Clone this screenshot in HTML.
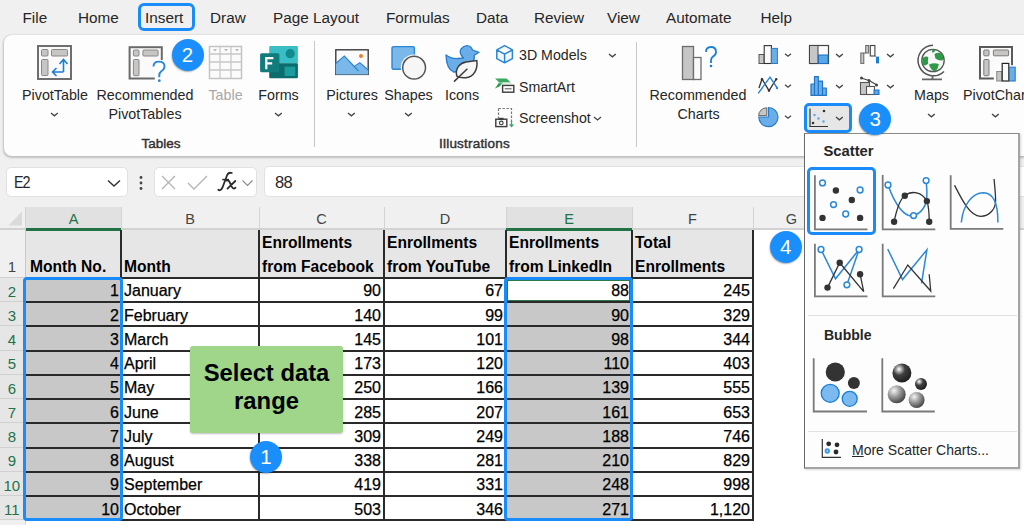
<!DOCTYPE html>
<html><head><meta charset="utf-8"><style>
html,body{margin:0;padding:0;width:1024px;height:525px;overflow:hidden;background:#f0f0f0}
body{position:relative;font-family:"Liberation Sans",sans-serif}
.t{position:absolute;white-space:nowrap;line-height:1;font-family:"Liberation Sans",sans-serif}
.c{-webkit-text-stroke:0.25px currentColor}
.r{position:absolute}
</style></head><body>
<div class="r" style="left:0;top:0;width:1024px;height:525px;background:#f0f0f0"></div>
<div class="t" style="left:22.5px;top:10.0px;font-size:15.3px;font-weight:400;color:#262626;">File</div>
<div class="t" style="left:78.0px;top:10.0px;font-size:15.3px;font-weight:400;color:#262626;">Home</div>
<div class="t" style="left:145.0px;top:10.0px;font-size:15.3px;font-weight:400;color:#262626;">Insert</div>
<div class="t" style="left:210.0px;top:10.0px;font-size:15.3px;font-weight:400;color:#262626;">Draw</div>
<div class="t" style="left:273.0px;top:10.0px;font-size:15.3px;font-weight:400;color:#262626;">Page Layout</div>
<div class="t" style="left:386.0px;top:10.0px;font-size:15.3px;font-weight:400;color:#262626;">Formulas</div>
<div class="t" style="left:476.0px;top:10.0px;font-size:15.3px;font-weight:400;color:#262626;">Data</div>
<div class="t" style="left:534.0px;top:10.0px;font-size:15.3px;font-weight:400;color:#262626;">Review</div>
<div class="t" style="left:607.0px;top:10.0px;font-size:15.3px;font-weight:400;color:#262626;">View</div>
<div class="t" style="left:666.0px;top:10.0px;font-size:15.3px;font-weight:400;color:#262626;">Automate</div>
<div class="t" style="left:760.5px;top:10.0px;font-size:15.3px;font-weight:400;color:#262626;">Help</div>
<div class="r" style="left:138px;top:3px;width:57px;height:28px;border:3px solid #1a8cfa;border-radius:6px;box-sizing:border-box"></div>
<div class="r" style="left:4px;top:35px;width:1040px;height:121px;background:#fdfdfd;border-radius:8px;box-shadow:0 1px 2px 0.5px rgba(0,0,0,0.2)"></div>
<div class="r" style="left:314px;top:41px;width:1px;height:106px;background:#c8c8c8"></div>
<div class="r" style="left:636px;top:42px;width:1px;height:105px;background:#c8c8c8"></div>
<div class="t" style="left:11.0px;width:300px;top:137.0px;font-size:13.5px;font-weight:400;color:#333;text-align:center;-webkit-text-stroke:0.45px #333;">Tables</div>
<div class="t" style="left:324.5px;width:300px;top:137.0px;font-size:13.5px;font-weight:400;color:#333;text-align:center;-webkit-text-stroke:0.45px #333;letter-spacing:0.2px;">Illustrations</div>
<svg class="r" style="left:37px;top:45px" width="35" height="36" viewBox="0 0 35 36">
<rect x="1" y="1" width="33" height="33" fill="#fafafa" stroke="#6e6e6e" stroke-width="2"/>
<rect x="4.5" y="4.5" width="6.5" height="6.5" rx="1" fill="#c8c6c4" stroke="#8a8886" stroke-width="1"/>
<rect x="14.5" y="4.5" width="16" height="6.5" rx="1" fill="#c8c6c4" stroke="#8a8886" stroke-width="1"/>
<rect x="4.5" y="14.5" width="6.5" height="16" rx="1" fill="#c8c6c4" stroke="#8a8886" stroke-width="1"/>
<path d="M26.5 27 V15 M22.5 19 L26.5 14.5 L30.5 19 M16 27 H26.5 M19.5 23 L15.5 27 L19.5 31" fill="none" stroke="#1a7fd4" stroke-width="1.6"/>
</svg>
<div class="t" style="left:-95.0px;width:300px;top:88.4px;font-size:14.3px;font-weight:400;color:#262626;text-align:center;">PivotTable</div>
<svg class="r" style="left:50.1px;top:110.6px" width="8.8" height="6.8" viewBox="0 0 8.8 6.8"><path d="M1 2.0 L4.4 4.8 L7.8 2.0" fill="none" stroke="#444" stroke-width="1.3"/></svg>
<svg class="r" style="left:128px;top:45px" width="40" height="40" viewBox="0 0 40 40">
<rect x="1.6" y="2.2" width="32.2" height="31.3" fill="#fafafa" stroke="#6a6a6a" stroke-width="2"/>
<rect x="5.4" y="5" width="5.6" height="6" rx="1" fill="#c8c6c4" stroke="#8a8886" stroke-width="1"/>
<rect x="14.9" y="5" width="15.2" height="6" rx="1" fill="#c8c6c4" stroke="#8a8886" stroke-width="1"/>
<rect x="5.4" y="14.5" width="5.6" height="16.2" rx="1" fill="#c8c6c4" stroke="#8a8886" stroke-width="1"/>
<rect x="26.8" y="15" width="14" height="25" fill="#fdfdfd"/>
<path d="M25.5 21.5 Q25.5 16.6 31 16.6 Q36.5 16.6 36.5 21.3 Q36.5 24.3 33.3 26.2 Q31.3 27.6 31.3 30.3 V32.3" fill="none" stroke="#2a86d6" stroke-width="1.9"/>
<circle cx="31.3" cy="35.7" r="1.4" fill="#2a86d6"/>
</svg>
<div class="t" style="left:-5.0px;width:300px;top:88.4px;font-size:14.3px;font-weight:400;color:#262626;text-align:center;">Recommended</div>
<div class="t" style="left:-5.0px;width:300px;top:107.4px;font-size:14.3px;font-weight:400;color:#262626;text-align:center;">PivotTables</div>
<svg class="r" style="left:208px;top:45px" width="36" height="36" viewBox="0 0 36 36">
<rect x="1.5" y="1.5" width="32" height="32" fill="#fbfbfb" stroke="#c4c4c4" stroke-width="1.5"/>
<path d="M1.5 9 H33.5 M1.5 17 H33.5 M1.5 25 H33.5 M12 1.5 V33.5 M23 1.5 V33.5" stroke="#c8c8c8" stroke-width="1.3"/>
<path d="M5 4 L7 6.5 L9 4 Z M16 4 L18 6.5 L20 4 Z M27 4 L29 6.5 L31 4 Z" fill="#b8b8b8"/>
</svg>
<div class="t" style="left:75.5px;width:300px;top:88.4px;font-size:14.3px;font-weight:400;color:#a8a8a8;text-align:center;">Table</div>
<svg class="r" style="left:259px;top:44px" width="40" height="36" viewBox="0 0 40 36">
<rect x="10.2" y="2" width="28.7" height="17.5" rx="1" fill="#38bec4"/>
<circle cx="31.2" cy="9.7" r="4.6" fill="#12898b"/>
<rect x="10.2" y="19.2" width="28.7" height="15" rx="1" fill="#0c6b6b"/>
<rect x="25.6" y="22.6" width="10.7" height="9.4" fill="#1c9c9c"/>
<rect x="1.1" y="9.3" width="19.3" height="19" rx="1.5" fill="#107c7c"/>
<path d="M7.3 25.2 V14.2 H14.4 M7.3 19.4 H13.2" fill="none" stroke="#fff" stroke-width="2.2"/>
</svg>
<div class="t" style="left:128.5px;width:300px;top:88.4px;font-size:14.3px;font-weight:400;color:#262626;text-align:center;">Forms</div>
<svg class="r" style="left:273.6px;top:110.6px" width="8.8" height="6.8" viewBox="0 0 8.8 6.8"><path d="M1 2.0 L4.4 4.8 L7.8 2.0" fill="none" stroke="#444" stroke-width="1.3"/></svg>
<svg class="r" style="left:334px;top:48px" width="36" height="28" viewBox="0 0 36 28">
<rect x="1.8" y="1.8" width="32.4" height="24.6" fill="#fafafa" stroke="#3c3c3c" stroke-width="1.4"/>
<path d="M1.8 15.5 L10.3 8 L21 18.5 L25.8 14.6 L34.2 22 V26.4 H1.8 Z" fill="#7ab8ea"/>
<path d="M1.8 15.5 L10.3 8 L24.5 23 M19.5 19 L25.8 14.6 L34.2 22" fill="none" stroke="#2a86d6" stroke-width="1.1"/>
<circle cx="27" cy="8" r="2" fill="#e8821e"/>
</svg>
<div class="t" style="left:202.0px;width:300px;top:88.4px;font-size:14.3px;font-weight:400;color:#262626;text-align:center;">Pictures</div>
<svg class="r" style="left:347.1px;top:110.6px" width="8.8" height="6.8" viewBox="0 0 8.8 6.8"><path d="M1 2.0 L4.4 4.8 L7.8 2.0" fill="none" stroke="#444" stroke-width="1.3"/></svg>
<svg class="r" style="left:390px;top:45px" width="38" height="37" viewBox="0 0 38 37">
<rect x="2" y="1.6" width="22.4" height="22.6" rx="1.5" fill="#7ab8ea" stroke="#2a86d6" stroke-width="1.4"/>
<circle cx="24.1" cy="22.7" r="13.3" fill="#fdfdfd"/>
<circle cx="24.1" cy="22.7" r="11.4" fill="#f6f6f6" stroke="#555" stroke-width="1.5"/>
</svg>
<div class="t" style="left:258.5px;width:300px;top:88.4px;font-size:14.3px;font-weight:400;color:#262626;text-align:center;">Shapes</div>
<svg class="r" style="left:403.6px;top:110.6px" width="8.8" height="6.8" viewBox="0 0 8.8 6.8"><path d="M1 2.0 L4.4 4.8 L7.8 2.0" fill="none" stroke="#444" stroke-width="1.3"/></svg>
<svg class="r" style="left:444px;top:44px" width="38" height="40" viewBox="0 0 38 40">
<path d="M2 11 Q7 15 14 14.5 L19.5 14 Q14.5 9 17 5 Q20 1.5 23 1.7 Q27 2 28.5 6 L35 8.3 L30 11.5 Q31 14 29 18 L26 27 L9.5 28 Q2.5 25 2 11 Z" fill="#6aaee9" stroke="#2a7cc9" stroke-width="1.3" stroke-linejoin="round"/>
<path d="M12.7 32 C11 24 16 19 22 18 L32.8 16.6 C34 25 30 33 21.7 33.7 C17 34 14 33 12.7 32 Z" fill="#f6f6f6" stroke="#3c3c3c" stroke-width="1.5"/>
<path d="M10 37.6 L23.4 24.7" fill="none" stroke="#3c3c3c" stroke-width="1.5"/>
</svg>
<div class="t" style="left:312.0px;width:300px;top:88.4px;font-size:14.3px;font-weight:400;color:#262626;text-align:center;">Icons</div>
<svg class="r" style="left:494px;top:43px" width="20" height="22" viewBox="0 0 20 22">
<path d="M10.6 2.6 L18.4 6.8 V15.6 L10.6 19.8 L2.8 15.6 V6.8 Z M2.8 6.8 L10.6 11.2 L18.4 6.8 M10.6 11.2 V19.8" fill="#f2f7fc" stroke="#2a86d6" stroke-width="1.5" stroke-linejoin="round"/>
</svg>
<div class="t" style="left:519.0px;top:48.0px;font-size:14.2px;font-weight:400;color:#262626;">3D Models</div>
<svg class="r" style="left:607.6px;top:51.6px" width="8.8" height="6.8" viewBox="0 0 8.8 6.8"><path d="M1 2.0 L4.4 4.8 L7.8 2.0" fill="none" stroke="#444" stroke-width="1.3"/></svg>
<svg class="r" style="left:494px;top:77px" width="22" height="18" viewBox="0 0 22 18">
<path d="M1 1.6 H12.5 L16.5 5.2 H5 Z" fill="#3aa860"/>
<path d="M1 11.5 L5 5.5 H9 L5.5 9.5 Z" fill="#2e9a52"/>
<path d="M4 6 H17" stroke="#9ed3ad" stroke-width="0.8"/>
<rect x="8.6" y="8.4" width="11.2" height="6.8" fill="#fafafa" stroke="#3c3c3c" stroke-width="1.4"/>
<path d="M10.8 11.8 H17.6" stroke="#555" stroke-width="1"/>
</svg>
<div class="t" style="left:519.0px;top:80.0px;font-size:14.2px;font-weight:400;color:#262626;">SmartArt</div>
<svg class="r" style="left:494px;top:107px" width="22" height="21" viewBox="0 0 22 21">
<path d="M4.5 1.5 H17.5 V15" fill="none" stroke="#777" stroke-width="1.2" stroke-dasharray="2.4 1.6"/>
<path d="M4.5 1.5 V11" fill="none" stroke="#777" stroke-width="1.2" stroke-dasharray="2.4 1.6"/>
<rect x="1.8" y="12.2" width="11" height="7.4" fill="#fafafa" stroke="#3c3c3c" stroke-width="1.4"/>
<rect x="4.5" y="10.8" width="5" height="2" fill="#3c3c3c"/>
<circle cx="7.3" cy="15.9" r="1.8" fill="none" stroke="#3c3c3c" stroke-width="1.1"/>
<path d="M17.5 14 V19.5 M15.6 17.4 L17.5 19.6 L19.4 17.4" stroke="#3aa860" stroke-width="1.3" fill="none"/>
</svg>
<div class="t" style="left:519.0px;top:111.0px;font-size:14.2px;font-weight:400;color:#262626;">Screenshot</div>
<svg class="r" style="left:592.5px;top:114.5px" width="9.0" height="7.0" viewBox="0 0 9.0 7.0"><path d="M1 2.1 L4.5 4.9 L8.0 2.1" fill="none" stroke="#444" stroke-width="1.3"/></svg>
<svg class="r" style="left:680px;top:45px" width="40" height="36" viewBox="0 0 40 36">
<rect x="2.5" y="1.5" width="11" height="33" fill="#c8c6c4" stroke="#6e6e6e" stroke-width="1.3"/>
<rect x="13.5" y="12.5" width="7.5" height="22" fill="#fafafa" stroke="#6e6e6e" stroke-width="1.3"/>
<path d="M26 7 Q26 2 31 2 Q36 2 36 7 Q36 10 32.5 12 Q31 13 31 16 V18" fill="none" stroke="#1a7fd4" stroke-width="1.8"/>
<circle cx="31" cy="21" r="1.3" fill="#1a7fd4"/>
</svg>
<div class="t" style="left:548.0px;width:300px;top:88.4px;font-size:14.3px;font-weight:400;color:#262626;text-align:center;">Recommended</div>
<div class="t" style="left:548.5px;width:300px;top:107.4px;font-size:14.3px;font-weight:400;color:#262626;text-align:center;">Charts</div>
<svg class="r" style="left:757px;top:44px" width="22" height="21" viewBox="0 0 22 21">
<rect x="2" y="10.5" width="5.2" height="9" fill="#c8c6c4" stroke="#555" stroke-width="1"/>
<rect x="7.2" y="1.6" width="7.2" height="17.9" fill="#fafafa" stroke="#333" stroke-width="1.1"/>
<rect x="14.4" y="4.4" width="6" height="15.1" fill="#6aaee9" stroke="#2a7cc9" stroke-width="1"/>
</svg>
<svg class="r" style="left:784px;top:52px" width="8" height="6" viewBox="0 0 8 6"><path d="M1 1.8 L4 4.2 L7 1.8" fill="none" stroke="#444" stroke-width="1.3"/></svg>
<svg class="r" style="left:757px;top:76px" width="22" height="19" viewBox="0 0 22 19">
<path d="M2 12 L5 3 L12 14.7 L19.3 3" fill="none" stroke="#333" stroke-width="1.3"/>
<circle cx="5" cy="3.2" r="1.2" fill="#333"/><circle cx="12" cy="14.5" r="1.2" fill="#333"/><circle cx="19.2" cy="3.2" r="1.2" fill="#333"/>
<path d="M1.2 17.4 L13 1.2 L20.2 12" fill="none" stroke="#2a86d6" stroke-width="1.4"/>
<circle cx="20" cy="12" r="1.2" fill="#2a86d6"/>
</svg>
<svg class="r" style="left:784px;top:83px" width="8" height="6" viewBox="0 0 8 6"><path d="M1 1.8 L4 4.2 L7 1.8" fill="none" stroke="#444" stroke-width="1.3"/></svg>
<svg class="r" style="left:757px;top:106px" width="23" height="23" viewBox="0 0 23 23">
<path d="M11.5 11 V1.5 A9.6 9.6 0 1 1 1.8 11 Z" fill="#6aaee9" stroke="#2a7cc9" stroke-width="1.2"/>
<path d="M9.8 9.6 V1.8 A8 8 0 0 0 1.6 9.6 Z" fill="#c8c6c4" stroke="#666" stroke-width="1"/>
</svg>
<svg class="r" style="left:784px;top:114px" width="8" height="6" viewBox="0 0 8 6"><path d="M1 1.8 L4 4.2 L7 1.8" fill="none" stroke="#444" stroke-width="1.3"/></svg>
<svg class="r" style="left:808px;top:44px" width="22" height="21" viewBox="0 0 22 21">
<rect x="1.5" y="1.5" width="19" height="18" fill="#fafafa" stroke="#444" stroke-width="1.2"/>
<rect x="2" y="2" width="8" height="17" fill="#c8c6c4"/>
<path d="M10 1.5 V19.5" stroke="#444" stroke-width="1"/>
<rect x="10.5" y="11" width="9.5" height="8.5" fill="#5aa6e6" stroke="#1a6fc0" stroke-width="1"/>
</svg>
<svg class="r" style="left:834.6px;top:51.6px" width="8.8" height="6.8" viewBox="0 0 8.8 6.8"><path d="M1 2.0 L4.4 4.8 L7.8 2.0" fill="none" stroke="#444" stroke-width="1.3"/></svg>
<svg class="r" style="left:859px;top:44px" width="22" height="21" viewBox="0 0 22 21">
<rect x="1.8" y="9" width="3" height="10.4" fill="#c8c6c4" stroke="#666" stroke-width="1"/>
<path d="M4.8 9 H6.7" stroke="#666" stroke-width="1"/>
<rect x="6.7" y="1.5" width="3" height="7.5" fill="#c8c6c4" stroke="#666" stroke-width="1"/>
<rect x="11.3" y="1.5" width="4.6" height="10.5" fill="#fafafa" stroke="#444" stroke-width="1.1"/>
<path d="M15.9 12 H17" stroke="#666" stroke-width="1"/>
<rect x="17" y="12.6" width="3" height="6.8" fill="#1a7fd4"/>
</svg>
<svg class="r" style="left:885.6px;top:51.6px" width="8.8" height="6.8" viewBox="0 0 8.8 6.8"><path d="M1 2.0 L4.4 4.8 L7.8 2.0" fill="none" stroke="#444" stroke-width="1.3"/></svg>
<svg class="r" style="left:809px;top:75px" width="20" height="21" viewBox="0 0 20 21">
<path d="M2 20.4 V9 H5.5 V20.4 Z M5.5 20.4 V1.6 H9.3 V20.4 Z M9.3 20.4 V6.1 H13.5 V20.4 Z M13.5 20.4 V13 H17.3 V20.4 Z" fill="#6aaee9" stroke="#1f74c8" stroke-width="1.2" stroke-linejoin="round"/>
</svg>
<svg class="r" style="left:834.6px;top:82.6px" width="8.8" height="6.8" viewBox="0 0 8.8 6.8"><path d="M1 2.0 L4.4 4.8 L7.8 2.0" fill="none" stroke="#444" stroke-width="1.3"/></svg>
<svg class="r" style="left:859px;top:75px" width="22" height="21" viewBox="0 0 22 21">
<rect x="1.5" y="7.5" width="9" height="12" fill="#c8c6c4" stroke="#555" stroke-width="1.1"/>
<rect x="7.5" y="11.5" width="8" height="8" fill="#fafafa" stroke="#555" stroke-width="1.1"/>
<rect x="15" y="15" width="5" height="4.5" fill="#5aa6e6" stroke="#1a6fc0" stroke-width="1"/>
<path d="M2 3 L10 5.5 L18 10" fill="none" stroke="#444" stroke-width="1.2"/>
<circle cx="2.5" cy="3" r="1.5" fill="#444"/><circle cx="10" cy="5.5" r="1.5" fill="#444"/><circle cx="17.5" cy="10" r="1.5" fill="#444"/>
</svg>
<svg class="r" style="left:885.6px;top:82.6px" width="8.8" height="6.8" viewBox="0 0 8.8 6.8"><path d="M1 2.0 L4.4 4.8 L7.8 2.0" fill="none" stroke="#444" stroke-width="1.3"/></svg>
<div class="r" style="left:804px;top:103px;width:48px;height:30px;background:#e6e6e6;border:3px solid #1a8cfa;border-radius:5px;box-sizing:border-box"></div>
<svg class="r" style="left:808px;top:107px" width="22" height="22" viewBox="0 0 22 22">
<path d="M2 1.5 V19.5 H20" fill="none" stroke="#333" stroke-width="1.2"/>
<circle cx="5" cy="16" r="1.3" fill="#333"/><circle cx="16" cy="4" r="1.3" fill="#333"/>
<circle cx="6.5" cy="8" r="1.2" fill="#5aa6e6"/><circle cx="10.5" cy="11.5" r="1.2" fill="#5aa6e6"/><circle cx="15.5" cy="14.5" r="1.2" fill="#5aa6e6"/>
</svg>
<svg class="r" style="left:834.6px;top:114.6px" width="8.8" height="6.8" viewBox="0 0 8.8 6.8"><path d="M1 2.0 L4.4 4.8 L7.8 2.0" fill="none" stroke="#444" stroke-width="1.3"/></svg>
<svg class="r" style="left:915px;top:43px" width="34" height="40" viewBox="0 0 34 40">
<circle cx="18" cy="17.5" r="11.2" fill="#f8f8f8" stroke="#555" stroke-width="1.3"/>
<path d="M18 2.2 A15.3 15.3 0 1 0 29 28.5" fill="none" stroke="#555" stroke-width="1.5"/>
<path d="M7.8 15 Q11 12.8 13.3 14 Q12.5 18 13.3 20.5 Q11 23 8 22.5 Q6.3 18 7.8 15 Z" fill="#2e9a48"/>
<path d="M17.3 6.5 Q19.5 5.8 20.3 7.5 Q19.3 9.8 17 9.8 Z" fill="#2e9a48"/>
<path d="M19.5 11 Q23 8.6 26.8 10.6 Q29 14 28 17.3 Q23 17.8 20.3 15.2 Z" fill="#2e9a48"/>
<path d="M14 21.5 Q19 19.4 23.8 21 Q23.3 26.3 19.5 28.6 Q15.6 27 14 21.5 Z" fill="#2e9a48"/>
<path d="M17.5 32.5 V36 M7 36.3 H27" stroke="#666" stroke-width="1.8"/>
</svg>
<div class="t" style="left:781.5px;width:300px;top:88.4px;font-size:14.3px;font-weight:400;color:#262626;text-align:center;">Maps</div>
<svg class="r" style="left:926.6px;top:111.6px" width="8.8" height="6.8" viewBox="0 0 8.8 6.8"><path d="M1 2.0 L4.4 4.8 L7.8 2.0" fill="none" stroke="#444" stroke-width="1.3"/></svg>
<svg class="r" style="left:979px;top:46px" width="40" height="38" viewBox="0 0 40 38">
<rect x="1" y="1" width="32" height="31.5" fill="#fafafa" stroke="#5a5a5a" stroke-width="2"/>
<rect x="4.8" y="4" width="5.2" height="5.8" rx="0.8" fill="#c8c6c4" stroke="#7a7a7a" stroke-width="1"/>
<rect x="14.4" y="4" width="15.2" height="5.8" rx="0.8" fill="#c8c6c4" stroke="#7a7a7a" stroke-width="1"/>
<rect x="4.8" y="13.5" width="5.2" height="16.2" rx="0.8" fill="#c8c6c4" stroke="#7a7a7a" stroke-width="1"/>
<rect x="14.8" y="19.2" width="25" height="19" fill="#fdfdfd"/>
<rect x="17.7" y="25.5" width="5.2" height="9.5" fill="#c8c6c4" stroke="#8a8a8a" stroke-width="1"/>
<rect x="23.2" y="17.4" width="6.6" height="17.6" fill="#fafafa" stroke="#222" stroke-width="1.2"/>
<rect x="30.4" y="21.2" width="5.8" height="13.8" fill="#6aaee9" stroke="#2a7cc9" stroke-width="1.1"/>
</svg>
<div class="t" style="left:963.0px;top:88.4px;font-size:14.3px;font-weight:400;color:#262626;">PivotChart</div>
<svg class="r" style="left:990.6px;top:111.6px" width="8.8" height="6.8" viewBox="0 0 8.8 6.8"><path d="M1 2.0 L4.4 4.8 L7.8 2.0" fill="none" stroke="#444" stroke-width="1.3"/></svg>
<div class="r" style="left:6px;top:167px;width:122px;height:30px;background:#fff;border:1px solid #e1e1e1;border-radius:5px;box-sizing:border-box"></div>
<div class="t" style="left:14.0px;top:174.8px;font-size:16px;font-weight:400;color:#262626;letter-spacing:-1.2px;transform:scaleX(0.9);transform-origin:left;">E2</div>
<svg class="r" style="left:106px;top:178px" width="16" height="10" viewBox="0 0 16 10"><path d="M2 2.5 L8 8 L14 2.5" fill="none" stroke="#333" stroke-width="1.5"/></svg>
<svg class="r" style="left:138px;top:175px" width="6" height="16" viewBox="0 0 6 16"><circle cx="3" cy="2.5" r="1.4" fill="#444"/><circle cx="3" cy="8" r="1.4" fill="#444"/><circle cx="3" cy="13.5" r="1.4" fill="#444"/></svg>
<div class="r" style="left:154px;top:167px;width:103px;height:30px;background:#fff;border:1px solid #e1e1e1;border-radius:5px;box-sizing:border-box"></div>
<svg class="r" style="left:160px;top:174px" width="17" height="17" viewBox="0 0 17 17"><path d="M2 2 L15 15 M15 2 L2 15" stroke="#b4b4b4" stroke-width="1.3"/></svg>
<svg class="r" style="left:186px;top:174px" width="23" height="17" viewBox="0 0 23 17"><path d="M2 9 L8 15 L21 2" fill="none" stroke="#b4b4b4" stroke-width="1.3"/></svg>
<svg class="r" style="left:216px;top:170px" width="22" height="24" viewBox="0 0 22 24"><path d="M2.3 19.8 Q4.6 21.4 6.5 17.5 L11 5.5 Q12.5 2 15.8 3" fill="none" stroke="#2a2a2a" stroke-width="1.8" stroke-linecap="round"/><path d="M6.3 9.6 H13" stroke="#2a2a2a" stroke-width="1.5"/><path d="M10.5 10.5 Q13 10 14 13 L16 17 Q17 19.5 19.5 17.8 M19.3 11 L11.5 18.6" fill="none" stroke="#2a2a2a" stroke-width="1.8" stroke-linecap="round"/></svg>
<svg class="r" style="left:241px;top:178px" width="13" height="10" viewBox="0 0 13 10"><path d="M1.5 2.5 L6.5 7.5 L11.5 2.5" fill="none" stroke="#8a8a8a" stroke-width="1.1"/></svg>
<div class="r" style="left:264px;top:166px;width:800px;height:31px;background:#fff;border:1px solid #e1e1e1;border-radius:5px;box-sizing:border-box"></div>
<div class="t" style="left:275.0px;top:174.3px;font-size:16.5px;font-weight:400;color:#262626;letter-spacing:-0.6px;">88</div>
<div class="r" style="left:26px;top:229px;width:998px;height:296px;background:#fff"></div>
<div class="r" style="left:0px;top:207px;width:1024px;height:22px;background:#f0f0f0"></div>
<div class="r" style="left:0px;top:229px;width:25px;height:296px;background:#f0f0f0"></div>
<svg class="r" style="left:8px;top:211px" width="15" height="15" viewBox="0 0 15 15"><path d="M14 0.5 V14.5 H0.5 Z" fill="#dadada"/></svg>
<div class="r" style="left:26px;top:207px;width:95px;height:22px;background:#e1e1e1"></div>
<div class="r" style="left:506px;top:207px;width:126px;height:22px;background:#e1e1e1"></div>
<div class="r" style="left:121px;top:207px;width:1px;height:22px;background:#d4d4d4"></div>
<div class="r" style="left:259px;top:207px;width:1px;height:22px;background:#d4d4d4"></div>
<div class="r" style="left:384px;top:207px;width:1px;height:22px;background:#d4d4d4"></div>
<div class="r" style="left:506px;top:207px;width:1px;height:22px;background:#d4d4d4"></div>
<div class="r" style="left:632px;top:207px;width:1px;height:22px;background:#d4d4d4"></div>
<div class="r" style="left:753px;top:207px;width:1px;height:22px;background:#d4d4d4"></div>
<div class="r" style="left:25px;top:207px;width:1px;height:318px;background:#d4d4d4"></div>
<div class="r" style="left:0px;top:228px;width:1024px;height:2px;background:#d2d2d2"></div>
<div class="t" style="left:-76.5px;width:300px;top:211.7px;font-size:14.5px;font-weight:400;color:#217346;text-align:center;">A</div>
<div class="t" style="left:40.0px;width:300px;top:211.7px;font-size:14.5px;font-weight:400;color:#444;text-align:center;">B</div>
<div class="t" style="left:171.5px;width:300px;top:211.7px;font-size:14.5px;font-weight:400;color:#444;text-align:center;">C</div>
<div class="t" style="left:295.0px;width:300px;top:211.7px;font-size:14.5px;font-weight:400;color:#444;text-align:center;">D</div>
<div class="t" style="left:419.0px;width:300px;top:211.7px;font-size:14.5px;font-weight:400;color:#217346;text-align:center;">E</div>
<div class="t" style="left:542.5px;width:300px;top:211.7px;font-size:14.5px;font-weight:400;color:#444;text-align:center;">F</div>
<div class="t" style="left:641.5px;width:300px;top:211.7px;font-size:14.5px;font-weight:400;color:#444;text-align:center;">G</div>
<div class="r" style="left:0px;top:277px;width:25px;height:1px;background:#d0d0d0"></div>
<div class="t" style="left:-138.2px;width:300px;top:259.3px;font-size:15px;font-weight:400;color:#444;text-align:center;">1</div>
<div class="r" style="left:0px;top:278px;width:25px;height:24px;background:#e6e6e6"></div>
<div class="r" style="left:0px;top:301px;width:25px;height:1px;background:#d0d0d0"></div>
<div class="t" style="left:-138.2px;width:300px;top:283.5px;font-size:15px;font-weight:400;color:#217346;text-align:center;">2</div>
<div class="r" style="left:0px;top:302px;width:25px;height:24px;background:#e6e6e6"></div>
<div class="r" style="left:0px;top:325px;width:25px;height:1px;background:#d0d0d0"></div>
<div class="t" style="left:-138.2px;width:300px;top:307.8px;font-size:15px;font-weight:400;color:#217346;text-align:center;">3</div>
<div class="r" style="left:0px;top:326px;width:25px;height:25px;background:#e6e6e6"></div>
<div class="r" style="left:0px;top:350px;width:25px;height:1px;background:#d0d0d0"></div>
<div class="t" style="left:-138.2px;width:300px;top:332.0px;font-size:15px;font-weight:400;color:#217346;text-align:center;">4</div>
<div class="r" style="left:0px;top:351px;width:25px;height:24px;background:#e6e6e6"></div>
<div class="r" style="left:0px;top:374px;width:25px;height:1px;background:#d0d0d0"></div>
<div class="t" style="left:-138.2px;width:300px;top:356.3px;font-size:15px;font-weight:400;color:#217346;text-align:center;">5</div>
<div class="r" style="left:0px;top:375px;width:25px;height:24px;background:#e6e6e6"></div>
<div class="r" style="left:0px;top:398px;width:25px;height:1px;background:#d0d0d0"></div>
<div class="t" style="left:-138.2px;width:300px;top:380.5px;font-size:15px;font-weight:400;color:#217346;text-align:center;">6</div>
<div class="r" style="left:0px;top:399px;width:25px;height:24px;background:#e6e6e6"></div>
<div class="r" style="left:0px;top:422px;width:25px;height:1px;background:#d0d0d0"></div>
<div class="t" style="left:-138.2px;width:300px;top:404.7px;font-size:15px;font-weight:400;color:#217346;text-align:center;">7</div>
<div class="r" style="left:0px;top:423px;width:25px;height:25px;background:#e6e6e6"></div>
<div class="r" style="left:0px;top:447px;width:25px;height:1px;background:#d0d0d0"></div>
<div class="t" style="left:-138.2px;width:300px;top:429.0px;font-size:15px;font-weight:400;color:#217346;text-align:center;">8</div>
<div class="r" style="left:0px;top:448px;width:25px;height:24px;background:#e6e6e6"></div>
<div class="r" style="left:0px;top:471px;width:25px;height:1px;background:#d0d0d0"></div>
<div class="t" style="left:-138.2px;width:300px;top:453.2px;font-size:15px;font-weight:400;color:#217346;text-align:center;">9</div>
<div class="r" style="left:0px;top:472px;width:25px;height:24px;background:#e6e6e6"></div>
<div class="r" style="left:0px;top:495px;width:25px;height:1px;background:#d0d0d0"></div>
<div class="t" style="left:-138.2px;width:300px;top:477.5px;font-size:15px;font-weight:400;color:#217346;text-align:center;">10</div>
<div class="r" style="left:0px;top:496px;width:25px;height:24px;background:#e6e6e6"></div>
<div class="r" style="left:0px;top:519px;width:25px;height:1px;background:#d0d0d0"></div>
<div class="t" style="left:-138.2px;width:300px;top:501.7px;font-size:15px;font-weight:400;color:#217346;text-align:center;">11</div>
<div class="r" style="left:26px;top:230px;width:727px;height:48px;background:#e7e6e6"></div>
<div class="r" style="left:26px;top:228px;width:95px;height:3px;background:#217346"></div>
<div class="r" style="left:506px;top:228px;width:126px;height:3px;background:#217346"></div>
<div class="r" style="left:26px;top:278px;width:95px;height:243px;background:#c8c8c8"></div>
<div class="r" style="left:506px;top:302px;width:126px;height:219px;background:#c8c8c8"></div>
<div class="r" style="left:120px;top:230px;width:2px;height:291px;background:#2a2a2a"></div>
<div class="r" style="left:258px;top:230px;width:2px;height:291px;background:#2a2a2a"></div>
<div class="r" style="left:383px;top:230px;width:2px;height:291px;background:#2a2a2a"></div>
<div class="r" style="left:505px;top:230px;width:2px;height:291px;background:#2a2a2a"></div>
<div class="r" style="left:631px;top:230px;width:2px;height:291px;background:#2a2a2a"></div>
<div class="r" style="left:752px;top:230px;width:2px;height:291px;background:#2a2a2a"></div>
<div class="r" style="left:25px;top:229px;width:1px;height:49px;background:#c8c8c8"></div>
<div class="r" style="left:26px;top:277px;width:727px;height:2px;background:#2a2a2a"></div>
<div class="r" style="left:26px;top:301px;width:727px;height:2px;background:#2a2a2a"></div>
<div class="r" style="left:26px;top:325px;width:727px;height:2px;background:#2a2a2a"></div>
<div class="r" style="left:26px;top:350px;width:727px;height:2px;background:#2a2a2a"></div>
<div class="r" style="left:26px;top:374px;width:727px;height:2px;background:#2a2a2a"></div>
<div class="r" style="left:26px;top:398px;width:727px;height:2px;background:#2a2a2a"></div>
<div class="r" style="left:26px;top:422px;width:727px;height:2px;background:#2a2a2a"></div>
<div class="r" style="left:26px;top:447px;width:727px;height:2px;background:#2a2a2a"></div>
<div class="r" style="left:26px;top:471px;width:727px;height:2px;background:#2a2a2a"></div>
<div class="r" style="left:26px;top:495px;width:727px;height:2px;background:#2a2a2a"></div>
<div class="r" style="left:26px;top:519px;width:727px;height:2px;background:#2a2a2a"></div>
<div class="t" style="left:30.0px;top:258.8px;font-size:15.6px;font-weight:700;color:#000;">Month No.</div>
<div class="t" style="left:124.0px;top:258.8px;font-size:15.6px;font-weight:700;color:#000;">Month</div>
<div class="t" style="left:262.0px;top:235.4px;font-size:15.6px;font-weight:700;color:#000;">Enrollments</div>
<div class="t" style="left:262.0px;top:258.8px;font-size:15.6px;font-weight:700;color:#000;">from Facebook</div>
<div class="t" style="left:387.0px;top:235.4px;font-size:15.6px;font-weight:700;color:#000;">Enrollments</div>
<div class="t" style="left:387.0px;top:258.8px;font-size:15.6px;font-weight:700;color:#000;">from YouTube</div>
<div class="t" style="left:509.0px;top:235.4px;font-size:15.6px;font-weight:700;color:#000;">Enrollments</div>
<div class="t" style="left:509.0px;top:258.8px;font-size:15.6px;font-weight:700;color:#000;">from LinkedIn</div>
<div class="t" style="left:635.0px;top:235.4px;font-size:15.6px;font-weight:700;color:#000;">Total</div>
<div class="t" style="left:635.0px;top:258.8px;font-size:15.6px;font-weight:700;color:#000;">Enrollments</div>
<div class="t c" style="right:905.0px;top:283.4px;font-size:16px;font-weight:400;color:#000;text-align:right;">1</div>
<div class="t c" style="left:124.0px;top:283.4px;font-size:16px;font-weight:400;color:#000;">January</div>
<div class="t c" style="right:643.0px;top:283.4px;font-size:16px;font-weight:400;color:#000;text-align:right;">90</div>
<div class="t c" style="right:521.0px;top:283.4px;font-size:16px;font-weight:400;color:#000;text-align:right;">67</div>
<div class="t c" style="right:274.0px;top:283.4px;font-size:16px;font-weight:400;color:#000;text-align:right;">245</div>
<div class="t c" style="right:905.0px;top:307.6px;font-size:16px;font-weight:400;color:#000;text-align:right;">2</div>
<div class="t c" style="left:124.0px;top:307.6px;font-size:16px;font-weight:400;color:#000;">February</div>
<div class="t c" style="right:643.0px;top:307.6px;font-size:16px;font-weight:400;color:#000;text-align:right;">140</div>
<div class="t c" style="right:521.0px;top:307.6px;font-size:16px;font-weight:400;color:#000;text-align:right;">99</div>
<div class="t c" style="right:395.0px;top:307.6px;font-size:16px;font-weight:400;color:#000;text-align:right;">90</div>
<div class="t c" style="right:274.0px;top:307.6px;font-size:16px;font-weight:400;color:#000;text-align:right;">329</div>
<div class="t c" style="right:905.0px;top:331.9px;font-size:16px;font-weight:400;color:#000;text-align:right;">3</div>
<div class="t c" style="left:124.0px;top:331.9px;font-size:16px;font-weight:400;color:#000;">March</div>
<div class="t c" style="right:643.0px;top:331.9px;font-size:16px;font-weight:400;color:#000;text-align:right;">145</div>
<div class="t c" style="right:521.0px;top:331.9px;font-size:16px;font-weight:400;color:#000;text-align:right;">101</div>
<div class="t c" style="right:395.0px;top:331.9px;font-size:16px;font-weight:400;color:#000;text-align:right;">98</div>
<div class="t c" style="right:274.0px;top:331.9px;font-size:16px;font-weight:400;color:#000;text-align:right;">344</div>
<div class="t c" style="right:905.0px;top:356.1px;font-size:16px;font-weight:400;color:#000;text-align:right;">4</div>
<div class="t c" style="left:124.0px;top:356.1px;font-size:16px;font-weight:400;color:#000;">April</div>
<div class="t c" style="right:643.0px;top:356.1px;font-size:16px;font-weight:400;color:#000;text-align:right;">173</div>
<div class="t c" style="right:521.0px;top:356.1px;font-size:16px;font-weight:400;color:#000;text-align:right;">120</div>
<div class="t c" style="right:395.0px;top:356.1px;font-size:16px;font-weight:400;color:#000;text-align:right;">110</div>
<div class="t c" style="right:274.0px;top:356.1px;font-size:16px;font-weight:400;color:#000;text-align:right;">403</div>
<div class="t c" style="right:905.0px;top:380.4px;font-size:16px;font-weight:400;color:#000;text-align:right;">5</div>
<div class="t c" style="left:124.0px;top:380.4px;font-size:16px;font-weight:400;color:#000;">May</div>
<div class="t c" style="right:643.0px;top:380.4px;font-size:16px;font-weight:400;color:#000;text-align:right;">250</div>
<div class="t c" style="right:521.0px;top:380.4px;font-size:16px;font-weight:400;color:#000;text-align:right;">166</div>
<div class="t c" style="right:395.0px;top:380.4px;font-size:16px;font-weight:400;color:#000;text-align:right;">139</div>
<div class="t c" style="right:274.0px;top:380.4px;font-size:16px;font-weight:400;color:#000;text-align:right;">555</div>
<div class="t c" style="right:905.0px;top:404.6px;font-size:16px;font-weight:400;color:#000;text-align:right;">6</div>
<div class="t c" style="left:124.0px;top:404.6px;font-size:16px;font-weight:400;color:#000;">June</div>
<div class="t c" style="right:643.0px;top:404.6px;font-size:16px;font-weight:400;color:#000;text-align:right;">285</div>
<div class="t c" style="right:521.0px;top:404.6px;font-size:16px;font-weight:400;color:#000;text-align:right;">207</div>
<div class="t c" style="right:395.0px;top:404.6px;font-size:16px;font-weight:400;color:#000;text-align:right;">161</div>
<div class="t c" style="right:274.0px;top:404.6px;font-size:16px;font-weight:400;color:#000;text-align:right;">653</div>
<div class="t c" style="right:905.0px;top:428.8px;font-size:16px;font-weight:400;color:#000;text-align:right;">7</div>
<div class="t c" style="left:124.0px;top:428.8px;font-size:16px;font-weight:400;color:#000;">July</div>
<div class="t c" style="right:643.0px;top:428.8px;font-size:16px;font-weight:400;color:#000;text-align:right;">309</div>
<div class="t c" style="right:521.0px;top:428.8px;font-size:16px;font-weight:400;color:#000;text-align:right;">249</div>
<div class="t c" style="right:395.0px;top:428.8px;font-size:16px;font-weight:400;color:#000;text-align:right;">188</div>
<div class="t c" style="right:274.0px;top:428.8px;font-size:16px;font-weight:400;color:#000;text-align:right;">746</div>
<div class="t c" style="right:905.0px;top:453.1px;font-size:16px;font-weight:400;color:#000;text-align:right;">8</div>
<div class="t c" style="left:124.0px;top:453.1px;font-size:16px;font-weight:400;color:#000;">August</div>
<div class="t c" style="right:643.0px;top:453.1px;font-size:16px;font-weight:400;color:#000;text-align:right;">338</div>
<div class="t c" style="right:521.0px;top:453.1px;font-size:16px;font-weight:400;color:#000;text-align:right;">281</div>
<div class="t c" style="right:395.0px;top:453.1px;font-size:16px;font-weight:400;color:#000;text-align:right;">210</div>
<div class="t c" style="right:274.0px;top:453.1px;font-size:16px;font-weight:400;color:#000;text-align:right;">829</div>
<div class="t c" style="right:905.0px;top:477.3px;font-size:16px;font-weight:400;color:#000;text-align:right;">9</div>
<div class="t c" style="left:124.0px;top:477.3px;font-size:16px;font-weight:400;color:#000;">September</div>
<div class="t c" style="right:643.0px;top:477.3px;font-size:16px;font-weight:400;color:#000;text-align:right;">419</div>
<div class="t c" style="right:521.0px;top:477.3px;font-size:16px;font-weight:400;color:#000;text-align:right;">331</div>
<div class="t c" style="right:395.0px;top:477.3px;font-size:16px;font-weight:400;color:#000;text-align:right;">248</div>
<div class="t c" style="right:274.0px;top:477.3px;font-size:16px;font-weight:400;color:#000;text-align:right;">998</div>
<div class="t c" style="right:905.0px;top:501.6px;font-size:16px;font-weight:400;color:#000;text-align:right;">10</div>
<div class="t c" style="left:124.0px;top:501.6px;font-size:16px;font-weight:400;color:#000;">October</div>
<div class="t c" style="right:643.0px;top:501.6px;font-size:16px;font-weight:400;color:#000;text-align:right;">503</div>
<div class="t c" style="right:521.0px;top:501.6px;font-size:16px;font-weight:400;color:#000;text-align:right;">346</div>
<div class="t c" style="right:395.0px;top:501.6px;font-size:16px;font-weight:400;color:#000;text-align:right;">271</div>
<div class="t c" style="right:274.0px;top:501.6px;font-size:16px;font-weight:400;color:#000;text-align:right;">1,120</div>
<div class="r" style="left:507px;top:280px;width:123px;height:21px;border:1.5px solid #2a7a4a;box-sizing:border-box;background:#fff"></div>
<div class="t c" style="right:395.0px;top:283.4px;font-size:16px;font-weight:400;color:#000;text-align:right;">88</div>
<div class="r" style="left:23px;top:277px;width:100px;height:243.5px;border:3px solid #1a8cfa;border-radius:4px;box-sizing:border-box"></div>
<div class="r" style="left:504px;top:277px;width:129px;height:243.5px;border:3px solid #1a8cfa;border-radius:4px;box-sizing:border-box"></div>
<div class="r" style="left:190px;top:346px;width:153px;height:87px;background:#a0d68a;border-radius:3px;box-shadow:0 1px 2px rgba(0,0,0,0.25)"></div>
<div class="t" style="left:116.5px;width:300px;top:361.3px;font-size:23.8px;font-weight:700;color:#000;text-align:center;">Select data</div>
<div class="t" style="left:116.5px;width:300px;top:389.4px;font-size:23.8px;font-weight:700;color:#000;text-align:center;">range</div>
<div class="r" style="left:804px;top:133px;width:216px;height:336px;background:#fdfdfd;border:1px solid #8a8a8a;border-left-color:#6a6a6a;border-right:2.5px solid #a4a4a4;border-bottom:2.5px solid #a4a4a4;box-sizing:border-box;box-shadow:1px 1px 2px rgba(0,0,0,0.15)"></div>
<div class="t" style="left:823.4px;top:144.0px;font-size:14.8px;font-weight:700;color:#262626;">Scatter</div>
<div class="r" style="left:807px;top:167px;width:69px;height:68px;border:3px solid #1a8cfa;border-radius:5px;box-sizing:border-box"></div>
<svg class="r" style="left:0;top:0" width="1024" height="525" viewBox="0 0 1024 525"><path d="M814.9 175.2 V229.3 H867.5" fill="none" stroke="#7a7a7a" stroke-width="1.8"/><circle cx="822.5" cy="182.9" r="2.9" fill="#fff" stroke="#2b88d8" stroke-width="1.5"/><circle cx="860.1" cy="190" r="2.9" fill="#fff" stroke="#2b88d8" stroke-width="1.5"/><circle cx="833.5" cy="204.6" r="2.9" fill="#fff" stroke="#2b88d8" stroke-width="1.5"/><circle cx="845.7" cy="214" r="2.9" fill="#fff" stroke="#2b88d8" stroke-width="1.5"/><circle cx="835.9" cy="190.5" r="3.2" fill="#333"/><circle cx="851.8" cy="200" r="3.2" fill="#333"/><circle cx="822.5" cy="217.9" r="3.2" fill="#333"/><circle cx="860.1" cy="217.9" r="3.2" fill="#333"/><path d="M882.7 175 V229.3 H935.3" fill="none" stroke="#7a7a7a" stroke-width="1.8"/><path d="M888 185 C895 205 905 218 913.6 215.6 C922 213 926 205 926.5 200 C927.5 192 926.5 185 926.1 180.6" fill="none" stroke="#2b88d8" stroke-width="1.5"/><path d="M894.1 221.7 C897 208 900 199 904.8 195.8 C912 190 922 192 926.9 201.1 C929 207 929.2 214 929.2 221.7" fill="none" stroke="#333" stroke-width="1.3"/><circle cx="888" cy="185" r="2.9" fill="#fff" stroke="#2b88d8" stroke-width="1.5"/><circle cx="926.1" cy="180.6" r="2.9" fill="#fff" stroke="#2b88d8" stroke-width="1.5"/><circle cx="913.6" cy="215.6" r="2.9" fill="#fff" stroke="#2b88d8" stroke-width="1.5"/><circle cx="904.8" cy="195.8" r="3.2" fill="#333"/><circle cx="926.9" cy="201.1" r="3.2" fill="#333"/><circle cx="894.1" cy="221.7" r="3.2" fill="#333"/><circle cx="929.2" cy="221.7" r="3.2" fill="#333"/><path d="M950.7 175.2 V228.9 H1003.3" fill="none" stroke="#7a7a7a" stroke-width="1.8"/><path d="M954.5 185.2 C962 200 970 216 980.4 216.4 C990 216.5 996 208 995.6 200.4 C995.5 192 994.5 185 994.1 179" fill="none" stroke="#333" stroke-width="1.3"/><path d="M961.3 222.5 C963 205 972 193 983.4 192.8 C995 193 998 208 997.9 222.5" fill="none" stroke="#2b88d8" stroke-width="1.5"/><path d="M814.9 243.7 V296.3 H867.5" fill="none" stroke="#7a7a7a" stroke-width="1.8"/><path d="M821 249.5 L835.5 278.8 L859.1 249.5 L846.9 284.8" fill="none" stroke="#2b88d8" stroke-width="1.5"/><path d="M827.5 287.6 L839.7 262.8 L863.7 291.7 L860.1 274.2" fill="none" stroke="#333" stroke-width="1.3"/><circle cx="821" cy="249.5" r="2.9" fill="#fff" stroke="#2b88d8" stroke-width="1.5"/><circle cx="859.1" cy="249.5" r="2.9" fill="#fff" stroke="#2b88d8" stroke-width="1.5"/><circle cx="846.9" cy="284.8" r="2.9" fill="#fff" stroke="#2b88d8" stroke-width="1.5"/><circle cx="827.5" cy="287.6" r="3.2" fill="#333"/><circle cx="839.7" cy="262.8" r="3.2" fill="#333"/><circle cx="860.1" cy="274.2" r="3.2" fill="#333"/><path d="M882.7 243.7 V296.3 H935.3" fill="none" stroke="#7a7a7a" stroke-width="1.8"/><path d="M887.7 249 L902.5 279.5 L926.9 249.8 L921.5 283.3" fill="none" stroke="#2b88d8" stroke-width="1.5"/><path d="M893.4 288.7 L907.8 265 L930.7 291 L929.2 274.2" fill="none" stroke="#333" stroke-width="1.3"/><path d="M813.7 358.3 V411.5 H867" fill="none" stroke="#7a7a7a" stroke-width="1.8"/><circle cx="835.3" cy="372" r="9.6" fill="#333"/><circle cx="853.9" cy="383" r="6" fill="#333"/><circle cx="830.2" cy="393.3" r="9" fill="#7cb9ef" stroke="#1a7fd4" stroke-width="1.3"/><circle cx="849.7" cy="398.8" r="7.5" fill="#7cb9ef" stroke="#1a7fd4" stroke-width="1.3"/><path d="M882.3 358.3 V411.5 H934.8" fill="none" stroke="#7a7a7a" stroke-width="1.8"/><defs><radialGradient id="sph" cx="0.35" cy="0.3" r="0.7"><stop offset="0" stop-color="#f4f4f4"/><stop offset="0.5" stop-color="#9a9a9a"/><stop offset="1" stop-color="#4a4a4a"/></radialGradient>
<radialGradient id="sph2" cx="0.35" cy="0.3" r="0.7"><stop offset="0" stop-color="#ffffff"/><stop offset="0.45" stop-color="#404040"/><stop offset="1" stop-color="#202020"/></radialGradient></defs><circle cx="901.9" cy="373" r="9.5" fill="url(#sph2)"/><circle cx="921" cy="384" r="6" fill="url(#sph2)"/><circle cx="896.7" cy="394.3" r="9" fill="url(#sph)"/><circle cx="916.6" cy="400" r="8" fill="url(#sph)"/></svg>
<div class="r" style="left:807.5px;top:315px;width:209px;height:1px;background:#e1e1e1"></div>
<div class="t" style="left:824.0px;top:327.6px;font-size:14px;font-weight:700;color:#262626;">Bubble</div>
<div class="r" style="left:807.5px;top:431px;width:209px;height:1px;background:#e1e1e1"></div>
<svg class="r" style="left:820px;top:438px" width="22" height="21" viewBox="0 0 22 21">
<path d="M2.3 1 V19.3 H21" fill="none" stroke="#333" stroke-width="1.2"/>
<circle cx="8.7" cy="5.8" r="2.4" fill="#2a2a2a"/><circle cx="17" cy="6.8" r="2.4" fill="#2a2a2a"/><circle cx="16" cy="14" r="2.4" fill="#2a2a2a"/>
<circle cx="7.3" cy="13" r="2.7" fill="#3d97e2"/><circle cx="7.3" cy="13" r="0.8" fill="#e8f2fb"/>
</svg>
<div class="t" style="left:852.0px;top:443.1px;font-size:14px;font-weight:400;color:#262626;"><u>M</u>ore Scatter Charts...</div>
<div class="r" style="left:171.5px;top:38.6px;width:32px;height:32px;border-radius:50%;background:#1a8ffc;box-shadow:-0.5px 1px 1.5px rgba(0,0,0,0.3)"></div>
<div class="t" style="left:37.5px;width:300px;top:44.8px;font-size:20.5px;font-weight:400;color:#fff;text-align:center;">2</div>
<div class="r" style="left:859.3px;top:103.0px;width:32px;height:32px;border-radius:50%;background:#1a8ffc;box-shadow:-0.5px 1px 1.5px rgba(0,0,0,0.3)"></div>
<div class="t" style="left:725.3px;width:300px;top:109.2px;font-size:20.5px;font-weight:400;color:#fff;text-align:center;">3</div>
<div class="r" style="left:769.7px;top:230.5px;width:32px;height:32px;border-radius:50%;background:#1a8ffc;box-shadow:-0.5px 1px 1.5px rgba(0,0,0,0.3)"></div>
<div class="t" style="left:635.7px;width:300px;top:236.7px;font-size:20.5px;font-weight:400;color:#fff;text-align:center;">4</div>
<div class="r" style="left:250.0px;top:441.0px;width:32px;height:32px;border-radius:50%;background:#1a8ffc;box-shadow:-0.5px 1px 1.5px rgba(0,0,0,0.3)"></div>
<div class="t" style="left:116.0px;width:300px;top:447.2px;font-size:20.5px;font-weight:400;color:#fff;text-align:center;">1</div>
</body></html>
